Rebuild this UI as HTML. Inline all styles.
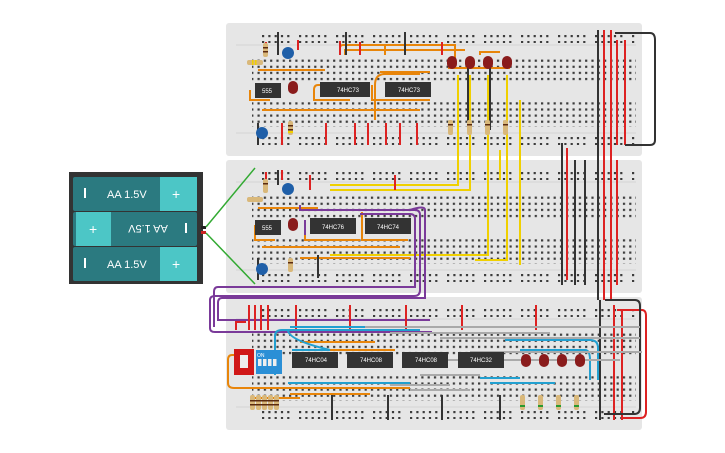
<!DOCTYPE html>
<html><head><meta charset="utf-8"><style>
html,body{margin:0;padding:0;background:#fff;width:725px;height:453px;overflow:hidden}
svg{display:block}
text{font-family:"Liberation Sans",sans-serif}
</style></head><body>
<svg width="725" height="453" viewBox="0 0 725 453" xmlns="http://www.w3.org/2000/svg">
<defs>
<pattern id="h" x="252" y="0" width="6.3" height="6.1" patternUnits="userSpaceOnUse"><rect x="0" y="0" width="2.2" height="2.2" fill="#3c3c3c"/></pattern>
<pattern id="p" x="258" y="0" width="37" height="6" patternUnits="userSpaceOnUse"><g fill="#3c3c3c"><rect x="0" y="0" width="2.2" height="2.2"/><rect x="6.3" width="2.2" height="2.2"/><rect x="12.6" width="2.2" height="2.2"/><rect x="18.9" width="2.2" height="2.2"/><rect x="25.2" width="2.2" height="2.2"/></g></pattern>
<g id="board">
<rect x="0" y="0" width="416" height="133" rx="3" fill="#e6e6e6"/>
<line x1="10" y1="22" x2="410" y2="22" stroke="#d4d4d4"/>
<line x1="10" y1="110" x2="410" y2="110" stroke="#d4d4d4"/>
<rect x="32" y="11" width="380" height="9" fill="url(#p)"/>
<rect x="32" y="113" width="380" height="9" fill="url(#p)"/>
<rect x="26" y="33" width="384" height="28" fill="url(#h)"/>
<rect x="26" y="76" width="384" height="28" fill="url(#h)"/>
</g>
</defs>
<use href="#board" x="226" y="23"/>
<use href="#board" x="226" y="160"/>
<use href="#board" x="226" y="297"/>

<!-- battery -->
<rect x="69" y="172" width="134" height="112" fill="#333"/>
<rect x="73" y="177" width="124" height="34" rx="2" fill="#2b7a80"/>
<rect x="160" y="177" width="37" height="34" fill="#4cc6c6"/>
<rect x="73" y="212" width="124" height="34" rx="2" fill="#2b7a80"/>
<rect x="76" y="212" width="35" height="34" fill="#4cc6c6"/>
<rect x="73" y="247" width="124" height="34" rx="2" fill="#2b7a80"/>
<rect x="160" y="247" width="37" height="34" fill="#4cc6c6"/>
<g fill="#fff" font-size="11">
<text x="107" y="198">AA 1.5V</text><text x="107" y="268">AA 1.5V</text>
<text x="148" y="233" text-anchor="middle" transform="rotate(180 148 229)">AA 1.5V</text>
<text x="172" y="199" font-size="14">+</text><text x="172" y="269" font-size="14">+</text><text x="89" y="234" font-size="14">+</text>
<rect x="84" y="188" width="2" height="10"/><rect x="84" y="258" width="2" height="10"/><rect x="185" y="223" width="2" height="10"/>
</g>
<rect x="201" y="226" width="5" height="3" fill="#222"/><rect x="201" y="231" width="5" height="3" fill="#c22"/>
<path d="M206 227 L255 168 M206 233 L255 284" stroke="#3a3" stroke-width="1.5" fill="none"/>

<g fill="none" stroke-width="2">
<path d="M340 55 V48 Q340 45 343 45 H455 V60 M345 55 V50 H465 M385 55 V45 M480 55 V52 H500" stroke="#e8850a"/>
<path d="M258 70 H325 M355 85 H318 Q314 85 314 90 V100 H350 M380 72 H430 M372 85 V100 H430 M375 120 V85 Q375 74 385 74 H420 M262 110 H420 M250 90 V100 H270 M300 110 H350 M448 68 H510" stroke="#e8850a"/>
<path d="M266 42 V55 M298 40 V50 M340 41 V55 M360 42 V55 M442 42 V55 M355 123 V145 M368 123 V145 M386 123 V145 M400 123 V145 M326 123 V145 M282 123 V145 M417 123 V145 M604 30 V300 M611 30 V300 M617 40 V145 M625 40 V145" stroke="#d22"/>
<path d="M278 32 V55 M346 32 V55 M405 32 V55 M598 30 V300 M615 33 H650 Q655 33 655 40 V140 Q655 145 650 145 H625 M258 123 V145" stroke="#333"/>
<path d="M458 75 V185 H330 M470 75 V190 H330 M488 75 V255 H330 M507 75 V260 H475 M500 150 V180 M520 100 V265" stroke="#f0d000"/>
<path d="M468 65 V130 M490 65 V130" stroke="#333"/>
</g>
<g fill="none" stroke-width="2">
<path d="M258 208 H318 M255 225 V240 H275 M305 225 V240 H360 M362 212 V240 H408 M262 247 H400 M300 258 H410" stroke="#e8850a"/>
<path d="M345 210 H415 Q420 210 420 215 V290 Q420 296 414 296 H215 Q210 296 210 300 V328 Q210 332 215 332 H432 M360 214 H410 Q415 214 415 219 V287 H218 Q214 287 214 292 V327 M305 220 V235 M300 205 V210 H410 Q425 205 425 210 V298 H222 Q218 298 218 303 V320 H430" stroke="#7a3a99"/>
<path d="M266 172 V190 M282 170 V180 M310 175 V190 M395 175 V190 M567 148 V280 M604 150 V300 M617 160 V285" stroke="#d22"/>
<path d="M278 170 V185 M258 258 V280 M318 255 V278 M562 143 V285 M575 160 V285 M585 160 V285" stroke="#333"/>
</g>
<g fill="none" stroke-width="2">
<path d="M236 330 V322 H246 M249 305 V330 M255 305 V330 M261 305 V330 M268 305 V330 M296 305 V330 M350 305 V330 M406 305 V330 M462 305 V330 M536 305 V330 M614 305 V420 M622 310 V420 M617 310 H642 Q646 310 646 316 V412 Q646 418 640 418 H622" stroke="#d22"/>
<path d="M600 300 V420 M605 300 H635 Q640 300 640 306 V408 Q640 414 634 414 H604 M332 395 V420 M388 395 V420 M442 395 V420 M500 395 V420" stroke="#333"/>
<path d="M240 355 H232 Q228 355 228 360 V383 Q228 388 234 388 H360 M300 342 H375 M305 350 H395 M300 388 H410 M290 394 H370 M250 398 H300" stroke="#e8850a"/>
<path d="M290 327 H420 M292 350 H330 Q288 340 288 330 M275 375 V336 Q275 330 282 330 H420 M288 383 H410 M505 340 H590 Q598 340 598 348 V380 M520 350 H585 Q590 350 590 360 V380 M480 378 H520 M490 383 H555" stroke="#22a0d0"/>
<path d="M365 327 H640 M390 333 H550 M440 338 H640 M470 352 H642 M440 360 H620 M420 375 H480 M390 385 H450 M410 390 H470" stroke="#aaa"/>
</g>
<g font-size="6" fill="#fff">
<rect x="255" y="83" width="26" height="15" fill="#333"/><text x="262" y="93">555</text>
<rect x="320" y="82" width="50" height="15" fill="#333"/><text x="337" y="92">74HC73</text>
<rect x="385" y="82" width="46" height="15" fill="#333"/><text x="398" y="92">74HC73</text>
<rect x="255" y="220" width="26" height="15" fill="#333"/><text x="262" y="230">555</text>
<rect x="310" y="218" width="46" height="16" fill="#333"/><text x="322" y="229">74HC76</text>
<rect x="365" y="218" width="46" height="16" fill="#333"/><text x="377" y="229">74HC74</text>
<rect x="292" y="352" width="46" height="16" fill="#333"/><text x="305" y="362">74HC04</text>
<rect x="347" y="352" width="46" height="16" fill="#333"/><text x="360" y="362">74HC08</text>
<rect x="402" y="352" width="46" height="16" fill="#333"/><text x="415" y="362">74HC08</text>
<rect x="458" y="352" width="46" height="16" fill="#333"/><text x="470" y="362">74HC32</text>
</g>
<rect x="234" y="349" width="20" height="26" fill="#d01818"/><rect x="240" y="355" width="8" height="13" fill="#eee"/>
<rect x="256" y="350" width="26" height="24" fill="#2a8fd6"/>
<g fill="#eee"><rect x="258" y="359" width="3.5" height="7"/><rect x="263" y="359" width="3.5" height="7"/><rect x="268" y="359" width="3.5" height="7"/><rect x="273" y="359" width="3.5" height="7"/></g>
<text x="257" y="357" font-size="5" fill="#fff">ON</text>
<g fill="#8a1c1c">
<rect x="288" y="81" width="10" height="13" rx="5"/>
<rect x="447" y="56" width="10" height="13" rx="5"/><rect x="465" y="56" width="10" height="13" rx="5"/><rect x="483" y="56" width="10" height="13" rx="5"/><rect x="502" y="56" width="10" height="13" rx="5"/>
<rect x="288" y="218" width="10" height="13" rx="5"/>
<rect x="521" y="354" width="10" height="13" rx="5"/><rect x="539" y="354" width="10" height="13" rx="5"/><rect x="557" y="354" width="10" height="13" rx="5"/><rect x="575" y="354" width="10" height="13" rx="5"/>
</g>
<g fill="#1f5fa8"><circle cx="288" cy="53" r="6"/><circle cx="262" cy="133" r="6"/><circle cx="288" cy="189" r="6"/><circle cx="262" cy="269" r="6"/></g>
<g fill="#d9b87a">
<rect x="263" y="43" width="5" height="14" rx="2"/><rect x="247" y="60" width="16" height="5" rx="2"/><rect x="288" y="121" width="5" height="14" rx="2"/>
<rect x="448" y="120" width="5" height="15" rx="2"/><rect x="467" y="120" width="5" height="15" rx="2"/><rect x="485" y="120" width="5" height="15" rx="2"/><rect x="503" y="120" width="5" height="15" rx="2"/>
<rect x="263" y="179" width="5" height="14" rx="2"/><rect x="247" y="197" width="16" height="5" rx="2"/><rect x="288" y="258" width="5" height="14" rx="2"/>
<rect x="250" y="395" width="5" height="15" rx="2"/><rect x="256" y="395" width="5" height="15" rx="2"/><rect x="262" y="395" width="5" height="15" rx="2"/><rect x="268" y="395" width="5" height="15" rx="2"/><rect x="274" y="395" width="5" height="15" rx="2"/>
<rect x="520" y="395" width="5" height="15" rx="2"/><rect x="538" y="395" width="5" height="15" rx="2"/><rect x="556" y="395" width="5" height="15" rx="2"/><rect x="574" y="395" width="5" height="15" rx="2"/>
</g>
<g fill="#5a2a10">
<rect x="263" y="47" width="5" height="1.5"/><rect x="263" y="51" width="5" height="1.5"/>
<rect x="288" y="125" width="5" height="1.5"/><rect x="288" y="129" width="5" height="1.5"/>
<rect x="263" y="183" width="5" height="1.5"/><rect x="288" y="262" width="5" height="1.5"/>
<rect x="448" y="124" width="5" height="1.5"/><rect x="467" y="124" width="5" height="1.5"/><rect x="485" y="124" width="5" height="1.5"/><rect x="503" y="124" width="5" height="1.5"/>
<rect x="250" y="400" width="29" height="1.5"/><rect x="250" y="404" width="29" height="1.5"/>
</g>
<g fill="#f0d000"><rect x="252" y="60" width="1.5" height="5"/><rect x="255" y="60" width="1.5" height="5"/><rect x="288" y="131" width="5" height="2"/></g>
<g fill="#2a9a30"><rect x="520" y="405" width="5" height="2"/><rect x="538" y="405" width="5" height="2"/><rect x="556" y="405" width="5" height="2"/><rect x="574" y="405" width="5" height="2"/></g>
</svg>
</body></html>
